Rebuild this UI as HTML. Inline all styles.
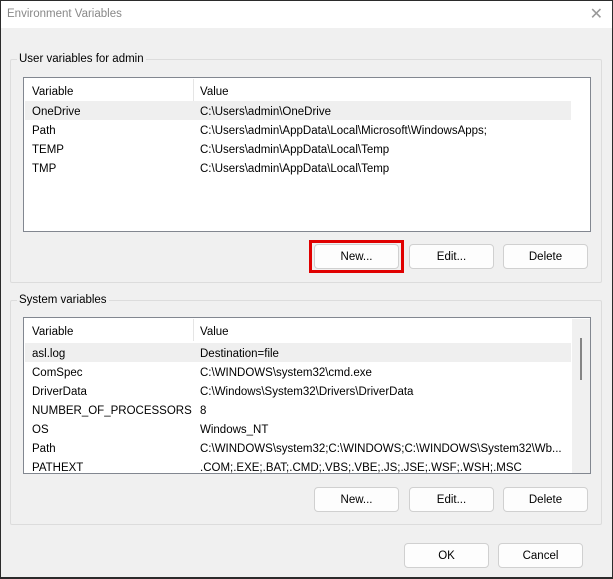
<!DOCTYPE html>
<html><head><style>
*{margin:0;padding:0;box-sizing:border-box}
body{width:613px;height:579px;overflow:hidden;background:#f0f0f0;font-family:"Liberation Sans",sans-serif;font-size:11.5px;color:#000;position:relative}
.a{position:absolute}
.win{position:absolute;left:0;top:0;width:613px;height:579px;border:1px solid #2b2b2b;border-bottom:2px solid #2b2b2b}
.title{left:1px;top:1px;width:611px;height:27px;background:#fff;color:#888;font-size:11.5px;padding:7px 0 0 6px}
.x{right:10px;top:4px;font-size:16px;color:#999}
.grp{border:1px solid #dcdcdc;border-radius:2px}
.lbl{background:#f0f0f0;padding:0 2px}
.lv{background:#fff;border:1px solid #828790;overflow:hidden}
.row{position:absolute;left:1px;height:19px;line-height:19px;white-space:nowrap}
.row span,.hdr span{position:absolute;left:7px;top:2px}
.row span.v,.hdr span.v{left:175px}
.hdr{position:absolute;left:1px;top:1px;height:22px;line-height:22px}
.div{position:absolute;left:169px;top:1px;width:1px;height:22px;background:#e5e5e5}
.sel{background:#efefef}
.btn{position:absolute;width:85px;height:25px;background:#fdfdfd;border:1px solid #d0d0d0;border-radius:4px;text-align:center;line-height:25px}
</style></head><body>
<div class="win"></div>
<div class="a title">Environment Variables</div>
<div class="a x">✕</div>

<div class="a grp" style="left:10px;top:59px;width:592px;height:224px"></div>
<div class="a lbl" style="left:17px;top:53px">User variables for admin</div>
<div class="a lv" style="left:23px;top:77px;width:568px;height:155px">
 <div class="hdr" style="width:546px"><span>Variable</span><span class="v">Value</span></div>
 <div class="div"></div>
 <div class="row sel" style="top:23px;width:546px"><span>OneDrive</span><span class="v">C:\Users\admin\OneDrive</span></div>
 <div class="row" style="top:42px"><span>Path</span><span class="v">C:\Users\admin\AppData\Local\Microsoft\WindowsApps;</span></div>
 <div class="row" style="top:61px"><span>TEMP</span><span class="v">C:\Users\admin\AppData\Local\Temp</span></div>
 <div class="row" style="top:80px"><span>TMP</span><span class="v">C:\Users\admin\AppData\Local\Temp</span></div>
</div>
<div class="a" style="left:309px;top:240px;width:95px;height:33px;border:3px solid #e00000"></div>
<div class="btn" style="left:314px;top:244px">New...</div>
<div class="btn" style="left:409px;top:244px">Edit...</div>
<div class="btn" style="left:503px;top:244px">Delete</div>

<div class="a grp" style="left:10px;top:300px;width:592px;height:225px"></div>
<div class="a lbl" style="left:17px;top:294px">System variables</div>
<div class="a lv" style="left:23px;top:317px;width:568px;height:157px">
 <div class="hdr" style="width:546px"><span>Variable</span><span class="v">Value</span></div>
 <div class="div"></div>
 <div class="row sel" style="top:25px;width:546px"><span>asl.log</span><span class="v">Destination=file</span></div>
 <div class="row" style="top:44px"><span>ComSpec</span><span class="v">C:\WINDOWS\system32\cmd.exe</span></div>
 <div class="row" style="top:63px"><span>DriverData</span><span class="v">C:\Windows\System32\Drivers\DriverData</span></div>
 <div class="row" style="top:82px"><span>NUMBER_OF_PROCESSORS</span><span class="v">8</span></div>
 <div class="row" style="top:101px"><span>OS</span><span class="v">Windows_NT</span></div>
 <div class="row" style="top:120px"><span>Path</span><span class="v">C:\WINDOWS\system32;C:\WINDOWS;C:\WINDOWS\System32\Wb...</span></div>
 <div class="row" style="top:139px"><span>PATHEXT</span><span class="v">.COM;.EXE;.BAT;.CMD;.VBS;.VBE;.JS;.JSE;.WSF;.WSH;.MSC</span></div>
 <div style="position:absolute;left:548px;top:1px;width:18px;height:154px;background:#f0f0f0"></div>
 <div style="position:absolute;left:556px;top:20px;width:2px;height:42px;background:#858585"></div>
</div>
<div class="btn" style="left:314px;top:487px">New...</div>
<div class="btn" style="left:409px;top:487px">Edit...</div>
<div class="btn" style="left:503px;top:487px">Delete</div>

<div class="btn" style="left:404px;top:543px">OK</div>
<div class="btn" style="left:498px;top:543px">Cancel</div>
</body></html>
